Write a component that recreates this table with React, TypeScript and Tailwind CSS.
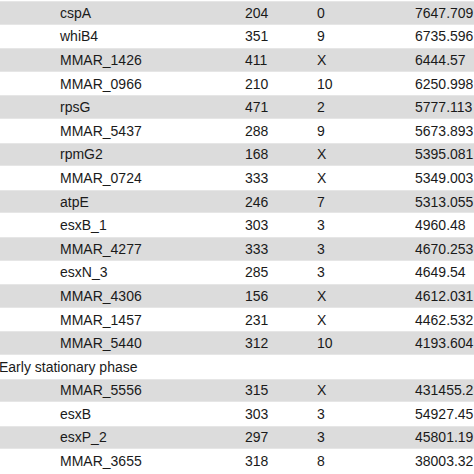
import React from 'react'

type Row = { name: string; len: string; cls: string; val: string }

const exponential: Row[] = [
  { name: 'cspA', len: '204', cls: '0', val: '7647.709' },
  { name: 'whiB4', len: '351', cls: '9', val: '6735.596' },
  { name: 'MMAR_1426', len: '411', cls: 'X', val: '6444.57' },
  { name: 'MMAR_0966', len: '210', cls: '10', val: '6250.998' },
  { name: 'rpsG', len: '471', cls: '2', val: '5777.113' },
  { name: 'MMAR_5437', len: '288', cls: '9', val: '5673.893' },
  { name: 'rpmG2', len: '168', cls: 'X', val: '5395.081' },
  { name: 'MMAR_0724', len: '333', cls: 'X', val: '5349.003' },
  { name: 'atpE', len: '246', cls: '7', val: '5313.055' },
  { name: 'esxB_1', len: '303', cls: '3', val: '4960.48' },
  { name: 'MMAR_4277', len: '333', cls: '3', val: '4670.253' },
  { name: 'esxN_3', len: '285', cls: '3', val: '4649.54' },
  { name: 'MMAR_4306', len: '156', cls: 'X', val: '4612.031' },
  { name: 'MMAR_1457', len: '231', cls: 'X', val: '4462.532' },
  { name: 'MMAR_5440', len: '312', cls: '10', val: '4193.604' },
]

const stationary: Row[] = [
  { name: 'MMAR_5556', len: '315', cls: 'X', val: '431455.2' },
  { name: 'esxB', len: '303', cls: '3', val: '54927.45' },
  { name: 'esxP_2', len: '297', cls: '3', val: '45801.19' },
  { name: 'MMAR_3655', len: '318', cls: '8', val: '38003.32' },
]

function DataRow({ row, shaded }: { row: Row; shaded: boolean }) {
  return (
    <div
      className={`grid grid-cols-[245px_72px_98px_1fr] items-center h-[23.6px] whitespace-nowrap ${
        shaded ? 'bg-[#dcdcdc] border-y border-[#e6e6e6]' : 'bg-white'
      }`}
    >
      <span className="pl-[60px]">{row.name}</span>
      <span>{row.len}</span>
      <span>{row.cls}</span>
      <span>{row.val}</span>
    </div>
  )
}

export default function App() {
  return (
    <div
      className="w-[474px] h-[474px] overflow-hidden bg-white pt-[1px] text-[14px] leading-none text-[#1a1a1a]"
      style={{ fontFamily: '"Liberation Sans", Arial, sans-serif' }}
    >
      {exponential.map((row, i) => (
        <DataRow key={row.name} row={row} shaded={i % 2 === 0} />
      ))}

      {/* Section header */}
      <div className="flex items-center h-[23.6px] whitespace-nowrap bg-white">
        <span className="-ml-[1px]">Early stationary phase</span>
      </div>

      {stationary.map((row, i) => (
        <DataRow key={row.name} row={row} shaded={i % 2 === 0} />
      ))}
    </div>
  )
}
